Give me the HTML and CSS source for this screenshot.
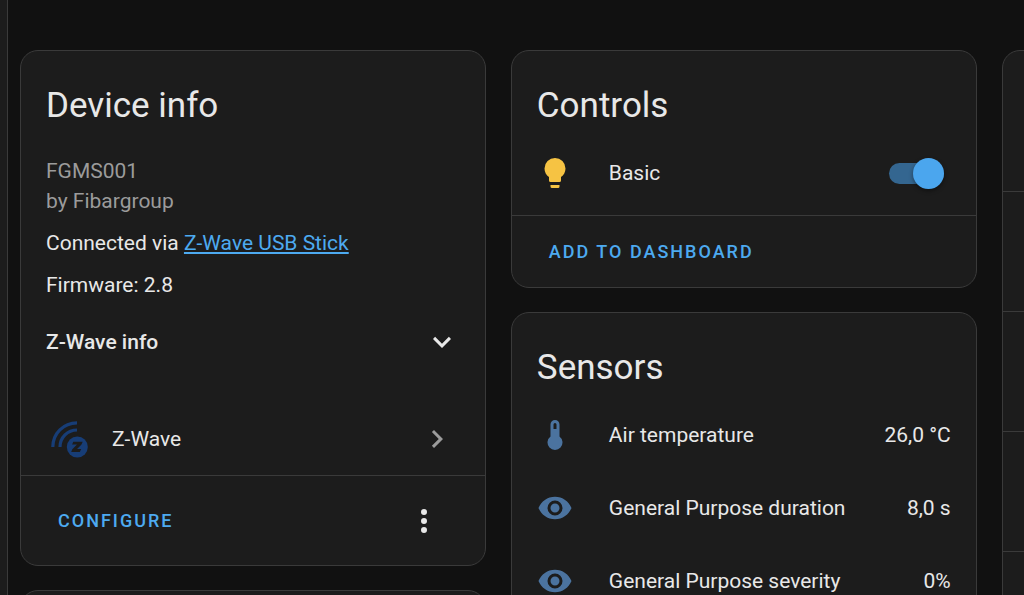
FILE: index.html
```
<!DOCTYPE html>
<html lang="en">
<head>
    <meta charset="UTF-8">
    <meta name="viewport" content="width=device-width, initial-scale=1.0">
    <title>Device</title>
    <link rel="stylesheet" href="styles.css">
</head>
<body>
    <aside class="sidebar"></aside>
    <main class="columns">
        <div class="column">
            <section class="card">
                <h1 class="card-title">Device info</h1>
                <div class="device-text">
                    <div class="model">FGMS001<br>by Fibargroup</div>
                    <div>Connected via <a href="#">Z-Wave USB Stick</a></div>
                    <div>Firmware: 2.8</div>
                </div>
                <button class="expander" type="button" aria-expanded="false">
                    <span>Z-Wave info</span>
                    <svg class="icon" viewBox="0 0 24 24" fill="currentColor">
                        <path d="M7.41 8.58L12 13.17l4.59-4.59L18 10l-6 6-6-6 1.41-1.42z"/>
                    </svg>
                </button>
                <a class="integration" href="#">
                    <svg class="brand" viewBox="0 0 37 37" fill="none">
                        <path d="M1.8 26C1.800 12.500 12.500 1.800 26 1.800M9 26C9 16.600 16.600 9 26 9" stroke="#173d76" stroke-width="3.2"/>
                        <circle cx="26.300" cy="26" r="10.500" fill="#173d76"/>
                        <path d="M22.300 20.800h9.400l-1.200 2.800-4.500 4.500h4.200l-1.400 2.900h-8.600l1.100-2.800 4.700-4.600h-4.900z" fill="#1c1c1c"/>
                    </svg>
                    <span>Z-Wave</span>
                    <svg class="icon next" viewBox="0 0 24 24" fill="currentColor">
                        <path d="M8.590 16.580L13.170 12 8.590 7.410 10 6l6 6-6 6-1.410-1.420z"/>
                    </svg>
                </a>
                <div class="card-actions tall">
                    <button class="action" type="button">CONFIGURE</button>
                    <button class="menu" type="button" aria-label="Menu">
                        <svg class="icon" viewBox="0 0 24 24" fill="currentColor">
                            <path d="M12 16a2 2 0 0 1 2 2 2 2 0 0 1-2 2 2 2 0 0 1-2-2 2 2 0 0 1 2-2m0-6a2 2 0 0 1 2 2 2 2 0 0 1-2 2 2 2 0 0 1-2-2 2 2 0 0 1 2-2m0-6a2 2 0 0 1 2 2 2 2 0 0 1-2 2 2 2 0 0 1-2-2 2 2 0 0 1 2-2z"/>
                        </svg>
                    </button>
                </div>
            </section>
            <section class="card empty"></section>
        </div>

        <div class="column">
            <section class="card">
                <h1 class="card-title">Controls</h1>
                <div class="rows">
                    <div class="row">
                        <svg class="icon on" viewBox="0 0 24 24" fill="currentColor">
                            <path d="M12 2a7 7 0 0 0-7 7c0 2.380 1.190 4.470 3 5.740V17a1 1 0 0 0 1 1h6a1 1 0 0 0 1-1v-2.260c1.810-1.270 3-3.360 3-5.740a7 7 0 0 0-7-7M9 21a1 1 0 0 0 1 1h4a1 1 0 0 0 1-1v-1H9v1z"/>
                        </svg>
                        <label class="name" for="basic">Basic</label>
                        <input class="switch" type="checkbox" role="switch" id="basic" checked>
                    </div>
                </div>
                <div class="card-actions">
                    <button class="action" type="button">ADD TO DASHBOARD</button>
                </div>
            </section>
            <section class="card">
                <h1 class="card-title">Sensors</h1>
                <div class="rows">
                    <div class="row">
                        <svg class="icon" viewBox="0 0 24 24" fill="currentColor">
                            <path d="M15 13V5a3 3 0 0 0-6 0v8a5 5 0 1 0 6 0m-3-9a1 1 0 0 1 1 1v3h-2V5a1 1 0 0 1 1-1z"/>
                        </svg>
                        <span class="name">Air temperature</span>
                        <span>26,0 °C</span>
                    </div>
                    <div class="row">
                        <svg class="icon" viewBox="0 0 24 24" fill="currentColor">
                            <path d="M12 9a3 3 0 0 0-3 3 3 3 0 0 0 3 3 3 3 0 0 0 3-3 3 3 0 0 0-3-3m0 8a5 5 0 0 1-5-5 5 5 0 0 1 5-5 5 5 0 0 1 5 5 5 5 0 0 1-5 5m0-12.500C7 4.500 2.730 7.610 1 12c1.730 4.390 6 7.500 11 7.500s9.270-3.110 11-7.500c-1.730-4.390-6-7.500-11-7.500z"/>
                        </svg>
                        <span class="name">General Purpose duration</span>
                        <span>8,0 s</span>
                    </div>
                    <div class="row">
                        <svg class="icon" viewBox="0 0 24 24" fill="currentColor">
                            <path d="M12 9a3 3 0 0 0-3 3 3 3 0 0 0 3 3 3 3 0 0 0 3-3 3 3 0 0 0-3-3m0 8a5 5 0 0 1-5-5 5 5 0 0 1 5-5 5 5 0 0 1 5 5 5 5 0 0 1-5 5m0-12.500C7 4.500 2.730 7.610 1 12c1.730 4.390 6 7.500 11 7.500s9.270-3.110 11-7.500c-1.730-4.390-6-7.500-11-7.500z"/>
                        </svg>
                        <span class="name">General Purpose severity</span>
                        <span>0%</span>
                    </div>
                </div>
            </section>
        </div>

        <div class="column">
            <section class="card list">
                <div class="list-item"></div>
                <div class="list-item"></div>
                <div class="list-item"></div>
                <div class="list-item"></div>
                <div class="list-item"></div>
            </section>
        </div>
    </main>
</body>
</html>
```
FILE: styles.css
```
* {
    box-sizing: border-box;
}
body {
    display: flex;
    height: 100vh;
    margin: 0;
    overflow: hidden;
    background-color: #111;
    color: #e8e8e8;
    font-family: Roboto, sans-serif;
    font-size: 21px;
    line-height: 30px;
}
button {
    padding: 0;
    border: 0;
    background: none;
    color: inherit;
    font: inherit;
    cursor: pointer;
}
.sidebar {
    flex: none;
    width: 8px;
    background-color: #1c1c1c;
    border-right: 1px solid #3a3a3a;
}
.columns {
    flex: 1;
    min-width: 0;
    display: grid;
    grid-template-columns: repeat(3, 46.4%);
    align-items: start;
    gap: 25px;
    padding: 50px 0 0 12px;
}
.column {
    display: flex;
    flex-direction: column;
    gap: 24px;
}
.card {
    background-color: #1c1c1c;
    border: 1px solid #3a3a3a;
    border-radius: 18px;
}
.card-title {
    margin: 0;
    padding: 31px 25px 0;
    font-size: 35px;
    font-weight: 400;
    line-height: 48px;
}
.icon {
    flex: none;
    width: 36px;
    height: 36px;
}

/* device info */
.device-text {
    display: flex;
    flex-direction: column;
    gap: 12px;
    padding: 26px 25px 0;
}
.device-text a {
    color: #4daaf0;
}
.model {
    color: #9b9b9b;
}
.expander {
    display: flex;
    align-items: center;
    justify-content: space-between;
    width: 100%;
    height: 72px;
    margin-top: 6px;
    padding: 0 25px;
    font-weight: 500;
}
.integration {
    display: flex;
    align-items: center;
    height: 72px;
    margin-top: 25px;
    padding: 0 30px;
    color: inherit;
    text-decoration: none;
}
.brand {
    width: 37px;
    height: 37px;
    margin-right: 24px;
}
.next {
    margin-left: auto;
    color: #9b9b9b;
}
.card-actions {
    display: flex;
    align-items: center;
    justify-content: space-between;
    height: 72px;
    padding: 0 43px 0 37px;
    border-top: 1px solid #3a3a3a;
}
.card-actions.tall {
    height: 90px;
}
.action {
    color: #4daaf0;
    font-size: 18px;
    font-weight: 500;
    letter-spacing: 2px;
}
.menu {
    display: flex;
}
.empty {
    height: 120px;
}

/* entity rows */
.rows {
    display: flex;
    flex-direction: column;
    gap: 13px;
    padding: 13px 25px 12px;
}
.row {
    display: flex;
    align-items: center;
    height: 60px;
}
.row .icon {
    color: #4b739f;
}
.row .icon.on {
    color: #f6c343;
}
.name {
    flex: 1;
    margin-left: 36px;
}
.switch {
    position: relative;
    appearance: none;
    width: 55px;
    height: 21px;
    margin: 0 7px 0 0;
    border-radius: 11px;
    background-color: #346690;
    cursor: pointer;
}
.switch::before {
    content: "";
    position: absolute;
    top: -5px;
    left: 0;
    width: 31px;
    height: 31px;
    border-radius: 50%;
    background-color: #4ba6ee;
    box-shadow: 0 2px 4px rgba(0, 0, 0, 0.4);
}
.switch:checked::before {
    left: auto;
    right: 0;
}

.list-item {
    height: 120px;
    border-bottom: 1px solid #3a3a3a;
}
.list-item:first-child {
    height: 141px;
}
.list-item:last-child {
    border-bottom: 0;
}
```
